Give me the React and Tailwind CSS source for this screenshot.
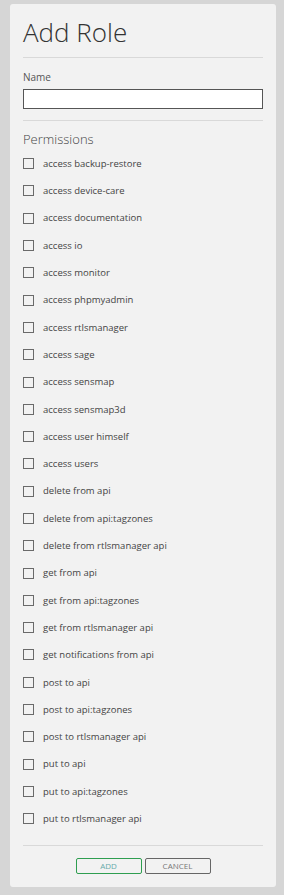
import React from 'react';

const permissions = [
  'access backup-restore',
  'access device-care',
  'access documentation',
  'access io',
  'access monitor',
  'access phpmyadmin',
  'access rtlsmanager',
  'access sage',
  'access sensmap',
  'access sensmap3d',
  'access user himself',
  'access users',
  'delete from api',
  'delete from api:tagzones',
  'delete from rtlsmanager api',
  'get from api',
  'get from api:tagzones',
  'get from rtlsmanager api',
  'get notifications from api',
  'post to api',
  'post to api:tagzones',
  'post to rtlsmanager api',
  'put to api',
  'put to api:tagzones',
  'put to rtlsmanager api',
];

export default function App() {
  return (
    <div className="min-h-[895px] bg-[#d6d6d6] pt-[4px] pb-[8px] font-['Open_Sans',sans-serif]">
      <div className="ml-[10px] mr-[8px] rounded-[3px] bg-[#f2f2f2] px-[13px] pt-[11px] pb-[13px]">
        <h1 className="text-[26px] font-light leading-[34px] text-[#333]">Add Role</h1>
        <div className="mt-[8px] h-px bg-[#d9d9d9]" />

        <label className="mt-[12px] block text-[10px] leading-[14px] text-[#555]">Name</label>
        <input
          type="text"
          className="mt-[5px] block h-[20px] w-full border border-[#555] bg-white px-1 text-[11px] outline-none"
        />
        <div className="mt-[11px] h-px bg-[#d9d9d9]" />

        <div className="mt-[9px] text-[13px] font-light leading-[18px] text-[#444]">Permissions</div>

        <ul className="mt-[2px]">
          {permissions.map((p) => (
            <li key={p} className="flex h-[27.3px] items-center gap-[9px]">
              <span className="h-[11px] w-[11px] shrink-0 border border-[#6a6a6a] bg-[#f2f2f2]" />
              <span className="text-[9.5px] leading-none text-[#444]">{p}</span>
            </li>
          ))}
        </ul>

        <div className="mt-[13px] h-px bg-[#d9d9d9]" />

        <div className="mt-[12px] flex justify-center gap-[3px]">
          <button className="h-[16px] w-[66px] rounded-[2px] border border-[#2e9e50] text-[8px] leading-none text-[#6aa]">
            ADD
          </button>
          <button className="h-[16px] w-[66px] rounded-[2px] border border-[#666] text-[8px] leading-none text-[#777]">
            CANCEL
          </button>
        </div>
      </div>
    </div>
  );
}
